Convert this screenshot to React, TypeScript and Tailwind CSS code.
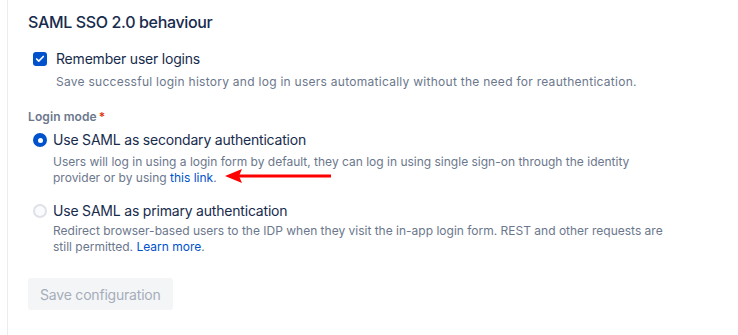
import { Check } from "lucide-react"

const font = { fontFamily: "Inter, 'Liberation Sans', sans-serif" }

function Radio({ checked }: { checked: boolean }) {
  if (checked) {
    return (
      <span className="flex h-[14px] w-[14px] items-center justify-center rounded-full bg-[#0052CC]">
        <span className="h-[5px] w-[5px] rounded-full bg-white" />
      </span>
    )
  }
  return <span className="block h-[14px] w-[14px] rounded-full border-2 border-[#DFE1E6] bg-[#FAFBFC]" />
}

export default function App() {
  return (
    <div className="h-[335px] w-[738px] bg-white" style={font}>
      <div className="ml-[7px] h-full border-l border-[#EBECF0] pl-[20px] pt-[10px]">
        <h2 className="text-[16px] font-medium leading-[24px] tracking-[-0.35px] text-[#172B4D]">
          SAML SSO 2.0 behaviour
        </h2>

        <div className="mt-[15px] flex pl-[5px]">
          <span className="mt-[3px] flex h-[14px] w-[14px] shrink-0 items-center justify-center rounded-[3px] bg-[#0052CC]">
            <Check className="h-[10px] w-[10px] text-white" strokeWidth={4} />
          </span>
          <div className="ml-[9px]">
            <div className="text-[14px] leading-[20px] tracking-[-0.2px] text-[#172B4D]">Remember user logins</div>
            <div className="mt-[5px] text-[12px] leading-[16px] tracking-[0.27px] text-[#6B778C]">
              Save successful login history and log in users automatically without the need for reauthentication.
            </div>
          </div>
        </div>

        <div className="mt-[19px] text-[12px] font-semibold leading-[16px] tracking-[0.1px] text-[#6B778C]">
          Login mode<span className="ml-[2px] text-[#DE350B]">*</span>
        </div>

        <div className="mt-[5px] flex pl-[5px]">
          <span className="mt-[3px] shrink-0">
            <Radio checked />
          </span>
          <div className="relative ml-[6px] w-[612px]">
            <div className="text-[14px] leading-[20px] tracking-[-0.2px] text-[#172B4D]">
              Use SAML as secondary authentication
            </div>
            <div className="mt-[4px] text-[12px] leading-[16px] text-[#6B778C]">
              Users will log in using a login form by default, they can log in using single sign-on through the identity
              provider or by using <span className="text-[#0052CC]">this link</span>.
            </div>
            <svg className="absolute left-[172px] top-[38px]" width="110" height="16" viewBox="0 0 110 16">
              <rect x="10" y="6.5" width="96" height="3" fill="#F00" />
              <polygon points="0,8 17,1 14,8 17,15" fill="#F00" />
            </svg>
          </div>
        </div>

        <div className="mt-[15px] flex pl-[5px]">
          <span className="mt-[3px] shrink-0">
            <Radio checked={false} />
          </span>
          <div className="ml-[6px] w-[612px]">
            <div className="text-[14px] leading-[20px] tracking-[-0.2px] text-[#172B4D]">
              Use SAML as primary authentication
            </div>
            <div className="mt-[2px] text-[12px] leading-[16px] text-[#6B778C]">
              Redirect browser-based users to the IDP when they visit the in-app login form. REST and other requests are
              still permitted. <span className="text-[#0052CC]">Learn more</span>.
            </div>
          </div>
        </div>

        <button className="mt-[23px] h-[32px] rounded-[3px] bg-[#F4F5F7] px-[12px] text-[14px] tracking-[-0.2px] text-[#A5ADBA]">
          Save configuration
        </button>
      </div>
    </div>
  )
}
